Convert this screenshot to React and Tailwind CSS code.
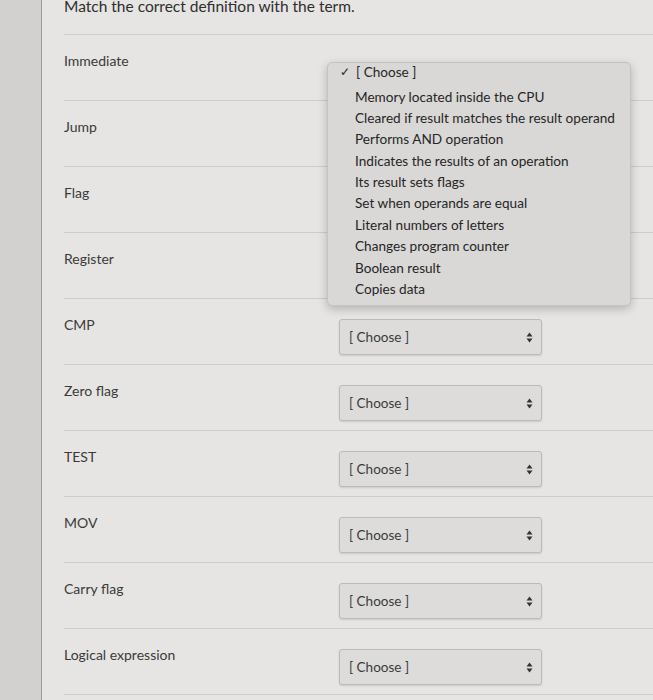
import React from 'react';

// Matching question: term on the left, definition select on the right.
const TERMS = ['Immediate', 'Jump', 'Flag', 'Register', 'CMP', 'Zero flag', 'TEST', 'MOV', 'Carry flag', 'Logical expression'];

const OPTIONS = [
  'Memory located inside the CPU',
  'Cleared if result matches the result operand',
  'Performs AND operation',
  'Indicates the results of an operation',
  'Its result sets flags',
  'Set when operands are equal',
  'Literal numbers of letters',
  'Changes program counter',
  'Boolean result',
  'Copies data',
];

function Arrows() {
  return (
    <svg width="7" height="11" viewBox="0 0 7 11" className="shrink-0">
      <path d="M3.5 0.5 L6.5 4.5 L0.5 4.5 Z" fill="#333" />
      <path d="M3.5 10.5 L6.5 6.5 L0.5 6.5 Z" fill="#333" />
    </svg>
  );
}

function FakeSelect({ hidden }) {
  return (
    <div className={(hidden ? 'invisible ' : '') + 'mt-[20px] w-[203px] h-[36px] flex items-center justify-between pl-[9px] pr-[8px] rounded-[3px] border border-[#bcbbb9] bg-[#dddcda] shadow-[0_1px_2px_rgba(0,0,0,0.12)] text-[13.5px] text-[#3b3b3b]'}>
      <span>[ Choose ]</span>
      <Arrows />
    </div>
  );
}

export default function App() {
  return (
    <div className="relative h-[700px] w-[653px] overflow-hidden flex bg-[#e6e5e3]" style={{ fontFamily: 'Lato, "Noto Sans", sans-serif' }}>
      <div className="w-[42px] shrink-0 bg-[#d2d1cf] border-r border-[#9d9c9a]" />
      <div className="flex-1 pl-[22px]">
        <div className="mt-[-5px] h-[40px] text-[15.5px] text-[#2e2e2e] border-b border-[#cfcecc]">
          Match the correct definition with the term.
        </div>
        {TERMS.map((t, i) => (
          <div key={t} className="h-[66px] flex items-start border-b border-[#cdccca]">
            <div className="w-[275px] pt-[15px] text-[14px] text-[#3a3a3a]">{t}</div>
            {/* the first rows' selects sit under the open list */}
            <FakeSelect hidden={i < 4} />
          </div>
        ))}
      </div>

      {/* open dropdown of the first row */}
      <div className="absolute left-[327px] top-[62px] w-[304px] h-[244px] rounded-[5px] bg-[#d9d8d6] border border-[#c4c3c1] shadow-[0_3px_10px_rgba(0,0,0,0.22)] pt-[1px] text-[13.6px] text-[#262626]">
        <div className="flex items-center h-[16px] pl-[12px] mb-[6px]">
          <span className="w-[16px] text-[12px]">✓</span>
          <span>[ Choose ]</span>
        </div>
        {OPTIONS.map((o) => (
          <div key={o} className="h-[21.4px] flex items-center pl-[27px]">{o}</div>
        ))}
      </div>
    </div>
  );
}
